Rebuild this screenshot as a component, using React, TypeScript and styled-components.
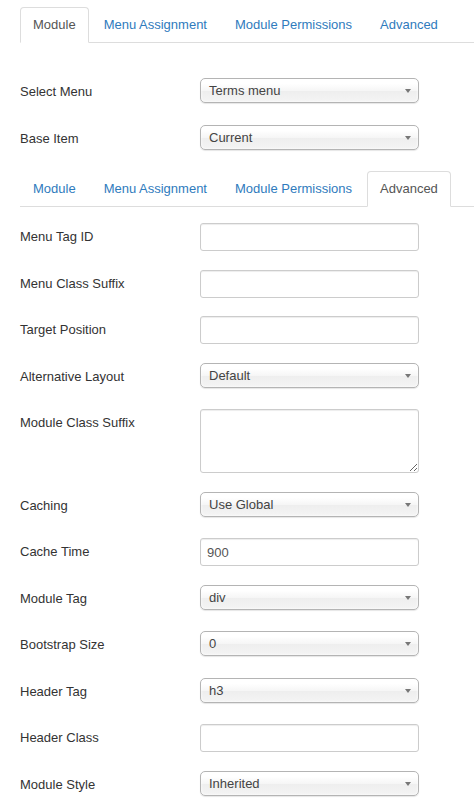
import React from "react";
import styled, { createGlobalStyle } from "styled-components";

const Global = createGlobalStyle`
  html, body { margin: 0; padding: 0; background: #fff; }
  body { font-family: "Liberation Sans", Arial, Helvetica, sans-serif; font-size: 13px; color: #333; }
  * { box-sizing: border-box; }
`;

const Page = styled.div`
  padding: 7px 0 0 20px;
  width: 474px;
`;

const TabBar = styled.ul`
  display: flex;
  list-style: none;
  margin: 0;
  padding: 0;
  border-bottom: 1px solid #ddd;
`;

const TabItem = styled.li`
  margin-bottom: -1px;
`;

const TabLink = styled.a<{ $active?: boolean }>`
  display: block;
  padding: 8px 12px;
  line-height: 18px;
  margin-right: 2px;
  border: 1px solid transparent;
  border-radius: 4px 4px 0 0;
  font-size: 13px;
  text-decoration: none;
  color: ${(p) => (p.$active ? "#555" : "#2f7bbd")};
  background: ${(p) => (p.$active ? "#fff" : "transparent")};
  border-color: ${(p) => (p.$active ? "#ddd #ddd transparent" : "transparent")};
  cursor: pointer;
`;

const Section = styled.div<{ $top: number }>`
  margin-top: ${(p) => p.$top}px;
`;

const Row = styled.div`
  display: flex;
  align-items: flex-start;
  min-height: 28px;
  margin-bottom: 18.5px;
`;

const Label = styled.label`
  width: 180px;
  flex: none;
  padding-top: 5px;
  line-height: 18px;
  color: #333;
  font-size: 13px;
`;

const SelectBox = styled.div`
  position: relative;
  width: 219px;
  height: 25px;
  border: 1px solid #b4b4b4;
  border-radius: 5px;
  background: linear-gradient(#ffffff 20%, #f6f6f6 50%, #eeeeee 52%, #f4f4f4 100%);
  box-shadow: inset 0 0 3px #fff, 0 1px 1px rgba(0, 0, 0, 0.1);
  color: #444;
  padding-left: 8px;
  line-height: 23px;
  font-size: 13px;
`;

const Arrow = styled.span`
  position: absolute;
  right: 7px;
  top: 10px;
  width: 0;
  height: 0;
  border-left: 3.5px solid transparent;
  border-right: 3.5px solid transparent;
  border-top: 4px solid #777;
`;

const TextInput = styled.input`
  width: 219px;
  height: 28px;
  padding: 4px 6px;
  border: 1px solid #ccc;
  border-radius: 3px;
  box-shadow: inset 0 1px 1px rgba(0, 0, 0, 0.075);
  font-family: "Liberation Sans", Arial, sans-serif;
  font-size: 13px;
  color: #555;
  outline: none;
`;

const TextArea = styled.textarea`
  width: 219px;
  height: 64px;
  padding: 4px 6px;
  border: 1px solid #ccc;
  border-radius: 3px;
  box-shadow: inset 0 1px 1px rgba(0, 0, 0, 0.075);
  font-family: "Liberation Sans", Arial, sans-serif;
  font-size: 13px;
  resize: vertical;
  display: block;
  outline: none;
`;

type Field =
  | { label: string; kind: "select"; value: string }
  | { label: string; kind: "input"; value?: string }
  | { label: string; kind: "textarea" };

const tabs = ["Module", "Menu Assignment", "Module Permissions", "Advanced"];

const Tabs: React.FC<{ active: number }> = ({ active }) => (
  <TabBar>
    {tabs.map((t, i) => (
      <TabItem key={t}>
        <TabLink $active={i === active}>{t}</TabLink>
      </TabItem>
    ))}
  </TabBar>
);

const FieldRow: React.FC<{ f: Field }> = ({ f }) => (
  <Row>
    <Label>{f.label}</Label>
    {f.kind === "select" && (
      <SelectBox>
        {f.value}
        <Arrow />
      </SelectBox>
    )}
    {f.kind === "input" && <TextInput defaultValue={f.value ?? ""} />}
    {f.kind === "textarea" && <TextArea />}
  </Row>
);

const moduleFields: Field[] = [
  { label: "Select Menu", kind: "select", value: "Terms menu" },
  { label: "Base Item", kind: "select", value: "Current" },
];

const advancedFields: Field[] = [
  { label: "Menu Tag ID", kind: "input" },
  { label: "Menu Class Suffix", kind: "input" },
  { label: "Target Position", kind: "input" },
  { label: "Alternative Layout", kind: "select", value: "Default" },
  { label: "Module Class Suffix", kind: "textarea" },
  { label: "Caching", kind: "select", value: "Use Global" },
  { label: "Cache Time", kind: "input", value: "900" },
  { label: "Module Tag", kind: "select", value: "div" },
  { label: "Bootstrap Size", kind: "select", value: "0" },
  { label: "Header Tag", kind: "select", value: "h3" },
  { label: "Header Class", kind: "input" },
  { label: "Module Style", kind: "select", value: "Inherited" },
];

export default function App() {
  return (
    <>
      <Global />
      <Page>
        <Tabs active={0} />
        <Section $top={35}>
          {moduleFields.map((f) => (
            <FieldRow key={f.label} f={f} />
          ))}
        </Section>
        <Tabs active={3} />
        <Section $top={16}>
          {advancedFields.map((f) => (
            <FieldRow key={f.label} f={f} />
          ))}
        </Section>
      </Page>
    </>
  );
}
